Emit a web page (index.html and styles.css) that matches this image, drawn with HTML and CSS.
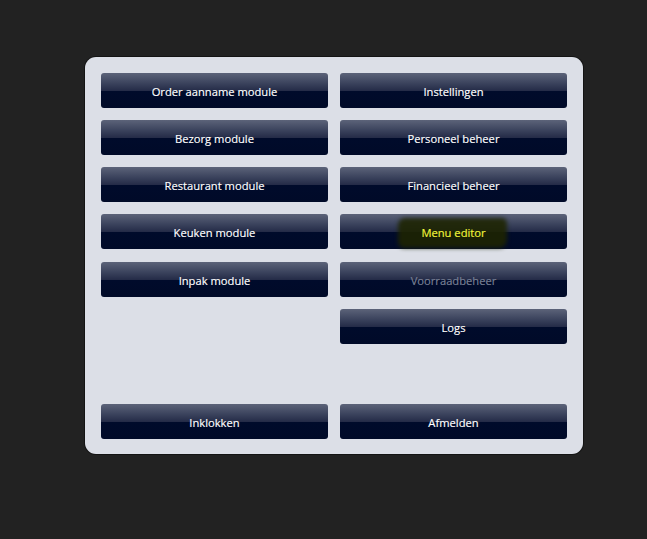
FILE: index.html
```html
<!DOCTYPE html>
<html lang="nl">
<head>
<meta charset="utf-8">
<title>Hoofdmenu</title>
<link rel="stylesheet" href="styles.css">
</head>
<body>
<div class="panel">
  <div class="grid">
    <button class="btn">Order aanname module</button>
    <button class="btn">Instellingen</button>
    <button class="btn">Bezorg module</button>
    <button class="btn">Personeel beheer</button>
    <button class="btn">Restaurant module</button>
    <button class="btn">Financieel beheer</button>
    <button class="btn">Keuken module</button>
    <button class="btn btn-highlight"><span class="glow">Menu editor</span></button>
    <button class="btn">Inpak module</button>
    <button class="btn btn-disabled">Voorraadbeheer</button>
    <div class="empty"></div>
    <button class="btn">Logs</button>
    <div class="spacer"></div>
    <button class="btn">Inklokken</button>
    <button class="btn">Afmelden</button>
  </div>
</div>
</body>
</html>
```

FILE: styles.css
```css
html, body {
  margin: 0;
  padding: 0;
}
body {
  background: #222222;
  width: 647px;
  height: 539px;
  overflow: hidden;
  font-family: "Open Sans", "Noto Sans", "DejaVu Sans", sans-serif;
}
.panel {
  margin: 57px 0 0 85px;
  width: 498px;
  height: 397px;
  box-sizing: border-box;
  padding: 16px 16px 15px;
  background: #dcdfe7;
  border-radius: 11px;
  box-shadow: 0 0 0 1px #141414;
}
.grid {
  height: 100%;
  display: grid;
  grid-template-columns: 227px 227px;
  grid-template-rows: repeat(4, 35px) 36px 35px 1fr 35px;
  column-gap: 12px;
  row-gap: 12px;
}
.spacer {
  grid-column: 1 / -1;
}
.btn {
  margin: 0;
  padding: 0;
  border: none;
  border-radius: 3px;
  font-family: inherit;
  font-size: 11.2px;
  color: #ffffff;
  background: linear-gradient(to bottom, #5c6379 0%, #3a425c 30%, #252c48 50%, #000b2b 51%, #000a28 100%);
  display: flex;
  align-items: center;
  justify-content: center;
  padding-top: 2px;
  box-sizing: border-box;
  align-self: end;
  height: 35px;
  -webkit-text-stroke: 0.15px currentColor;
}
.btn-disabled {
  color: #7a8196;
}
.btn-highlight {
  color: #f2f53a;
  position: relative;
  z-index: 0;
  isolation: isolate;
}
.glow {
  position: relative;
  display: inline-block;
}
.glow::before {
  content: "";
  position: absolute;
  left: -23px;
  right: -21px;
  top: -7px;
  bottom: -8px;
  background: rgba(30, 36, 0, 0.88);
  border-radius: 7px 5px 8px 6px;
  filter: blur(2px);
  z-index: -1;
}
```
